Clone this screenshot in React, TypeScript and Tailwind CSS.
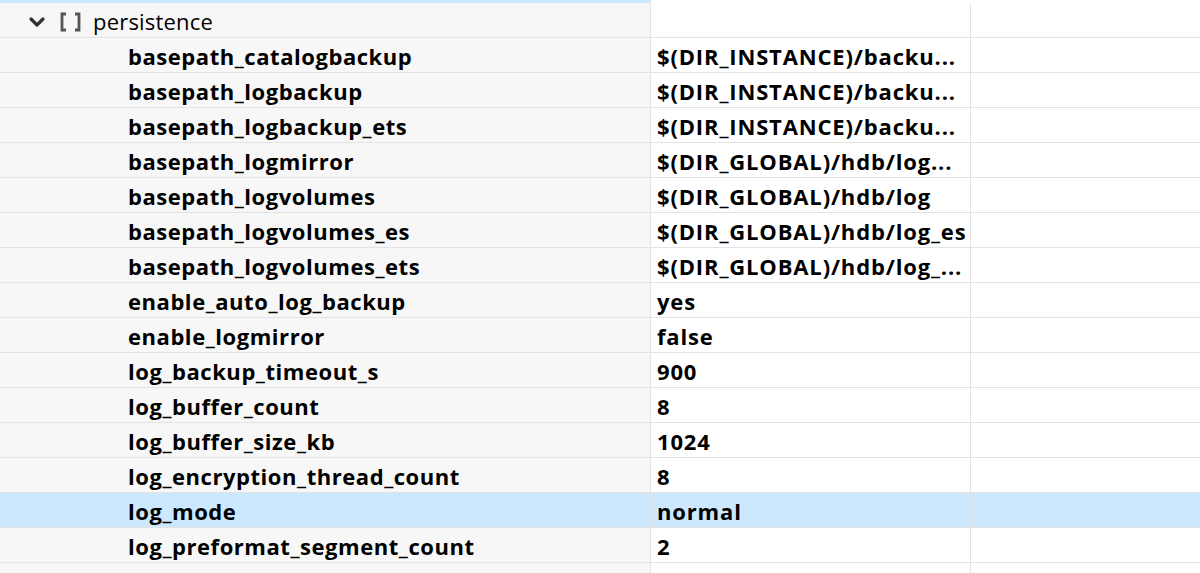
import { ChevronDown } from "lucide-react";

type Row = { name: string; value: string; selected?: boolean };

const rows: Row[] = [
  { name: "basepath_catalogbackup", value: "$(DIR_INSTANCE)/backu..." },
  { name: "basepath_logbackup", value: "$(DIR_INSTANCE)/backu..." },
  { name: "basepath_logbackup_ets", value: "$(DIR_INSTANCE)/backu..." },
  { name: "basepath_logmirror", value: "$(DIR_GLOBAL)/hdb/log..." },
  { name: "basepath_logvolumes", value: "$(DIR_GLOBAL)/hdb/log" },
  { name: "basepath_logvolumes_es", value: "$(DIR_GLOBAL)/hdb/log_es" },
  { name: "basepath_logvolumes_ets", value: "$(DIR_GLOBAL)/hdb/log_..." },
  { name: "enable_auto_log_backup", value: "yes" },
  { name: "enable_logmirror", value: "false" },
  { name: "log_backup_timeout_s", value: "900" },
  { name: "log_buffer_count", value: "8" },
  { name: "log_buffer_size_kb", value: "1024" },
  { name: "log_encryption_thread_count", value: "8" },
  { name: "log_mode", value: "normal", selected: true },
  { name: "log_preformat_segment_count", value: "2" },
  { name: "log_replay_step_size", value: "" },
];

const font = { fontFamily: "'Open Sans', 'Noto Sans', sans-serif" };

const BracketIcon = () => (
  <svg width="24" height="20" viewBox="0 0 24 20" className="shrink-0">
    <path d="M8 2H4V18H8" fill="none" stroke="#555" strokeWidth="2.8" />
    <path d="M17 2H21V18H17" fill="none" stroke="#555" strokeWidth="2.8" />
  </svg>
);

export default function App() {
  return (
    <div className="w-[1200px] h-[573px] overflow-hidden bg-white text-black" style={font}>
      <div className="flex h-[3px]">
        <div className="w-[651px] bg-[#cce8ff]" />
        <div className="flex-1 bg-white" />
      </div>
      <div className="flex h-[35px] border-b border-[#e3e3e3]">
        <div className="w-[651px] bg-[#f7f7f7] border-r border-[#e3e3e3] flex items-center pt-[3px]">
          <ChevronDown className="ml-[25px] w-[24px] h-[24px] text-[#333]" strokeWidth={3.2} />
          <div className="ml-[9px]">
            <BracketIcon />
          </div>
          <span className="ml-[11px] text-[22px] leading-none pb-[2px] tracking-[0.2px]">persistence</span>
        </div>
        <div className="w-[320px] border-r border-[#e3e3e3]" />
        <div className="flex-1" />
      </div>
      {rows.map((r) => (
        <div
          key={r.name}
          className={`flex h-[35px] border-b ${r.selected ? "bg-[#cce8ff] border-[#e3e3e3]" : "border-[#e3e3e3]"}`}
        >
          <div
            className={`w-[651px] border-r border-[#e3e3e3] flex items-center pl-[128px] ${r.selected ? "bg-[#cce8ff]" : "bg-[#f7f7f7]"}`}
          >
            <span className="text-[22px] font-bold leading-none tracking-[0.55px] pt-[1px] whitespace-nowrap">
              {r.name}
            </span>
          </div>
          <div className="w-[320px] border-r border-[#e3e3e3] flex items-center pl-[6px] overflow-hidden">
            <span className="text-[22px] font-bold leading-none tracking-[0.85px] pt-[1px] whitespace-nowrap">
              {r.value}
            </span>
          </div>
          <div className="flex-1" />
        </div>
      ))}
    </div>
  );
}
